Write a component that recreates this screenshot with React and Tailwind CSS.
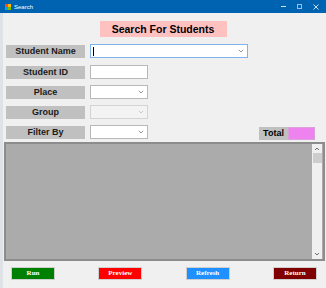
import React from "react";

const labelCls =
  "w-[79px] h-[13px] bg-[#c0c0c0] flex items-center justify-center text-[9px] font-bold text-[#1a1a1a] leading-none";

function Chevron({ light }) {
  return (
    <svg width="6" height="4" viewBox="0 0 6 4" className="mr-[3px]">
      <path d="M0.8 0.8 L3 3 L5.2 0.8" fill="none" stroke={light ? "#c4c4c4" : "#8a8a8a"} strokeWidth="0.9" />
    </svg>
  );
}

function Combo({ width, disabled, focused }) {
  return (
    <div
      className={
        "h-[14px] flex items-center justify-end border " +
        (focused ? "border-[#7eb4ea] bg-white " : disabled ? "border-[#d4d4d4] bg-[#f3f3f3] " : "border-[#b8b8b8] bg-white ")
      }
      style={{ width }}
    >
      {focused && <div className="w-px h-[9px] bg-black mr-auto ml-[2px]" />}
      <Chevron light={disabled} />
    </div>
  );
}

function Row({ label, children, right }) {
  return (
    <div className="flex items-center h-[14px]">
      <div className={labelCls}>{label}</div>
      <div className="ml-[5px] flex items-center">{children}</div>
      {right}
    </div>
  );
}

function Btn({ text, color }) {
  return (
    <div className="p-px bg-[#cfcfcf]">
      <div
        className="w-[42px] h-[11px] flex items-center justify-center text-white text-[7px] font-bold leading-none"
        style={{ backgroundColor: color, fontFamily: '"Liberation Serif", serif' }}
      >
        {text}
      </div>
    </div>
  );
}

export default function App() {
  return (
    <div
      className="w-[326px] h-[288px] bg-[#f0f0f0] flex flex-col overflow-hidden"
      style={{ fontFamily: '"Liberation Sans", Arial, sans-serif' }}
    >
      <div className="h-[13px] bg-[#0063b1] flex items-center">
        <div className="ml-[5px] w-[6px] h-[6px] grid grid-cols-2">
          <div className="bg-[#f25022]" />
          <div className="bg-[#ffb900]" />
          <div className="bg-[#00a4ef]" />
          <div className="bg-[#7fba00]" />
        </div>
        <span className="ml-[3px] text-[6px] text-white leading-none">Search</span>
        <div className="ml-auto flex items-center gap-[11px] mr-[7px] text-white">
          <div className="w-[5px] h-px bg-[#cfe0f0]" />
          <div className="w-[5px] h-[5px] border border-[#9fbfdf]" />
          <svg width="6" height="6" viewBox="0 0 6 6">
            <path d="M0.5 0.5 L5.5 5.5 M5.5 0.5 L0.5 5.5" stroke="#e6eef7" strokeWidth="0.9" />
          </svg>
        </div>
      </div>

      <div className="flex-1 flex flex-col border-l-[3px] border-[#dfe3e8]">
        <div className="flex justify-center mt-[8px] -ml-[3px]">
          <div className="w-[127px] h-[16px] bg-[#ffc0c0] flex items-center justify-center text-[10.5px] font-bold leading-none text-black">
            Search For Students
          </div>
        </div>

        <div className="mt-[7px] ml-[3px] flex flex-col gap-[6px] pr-[11px]">
          <Row label="Student Name">
            <Combo width={158} focused />
          </Row>
          <div className="mt-[1px]">
            <Row label="Student ID">
              <div className="w-[58px] h-[14px] bg-white border border-[#b8b8b8]" />
            </Row>
          </div>
          <Row label="Place">
            <Combo width={58} />
          </Row>
          <Row label="Group">
            <Combo width={58} disabled />
          </Row>
          <Row
            label="Filter By"
            right={
              <div className="ml-auto flex items-center mt-[2px]">
                <div className="w-[29px] h-[13px] bg-[#c0c0c0] flex items-center justify-center text-[9px] font-bold leading-none text-black">
                  Total
                </div>
                <div className="w-[27px] h-[13px] bg-[#ee82ee] border border-[#d9a0d9]" />
              </div>
            }
          >
            <Combo width={58} />
          </Row>
        </div>

        <div className="mt-[3px] ml-[1px] mr-[1px] h-[119px] bg-[#ababab] border-2 border-[#8c8c8c] flex justify-end">
          <div className="w-[10px] mr-[1px] bg-[#f0f0f0] flex flex-col items-center">
            <svg width="6" height="6" viewBox="0 0 6 6" className="mt-[2px]">
              <path d="M1 4 L3 2 L5 4" fill="none" stroke="#606060" strokeWidth="0.9" />
            </svg>
            <div className="w-[9px] h-[10px] bg-[#cdcdcd] mt-[1px]" />
            <div className="flex-1" />
            <svg width="6" height="6" viewBox="0 0 6 6" className="mb-[2px]">
              <path d="M1 2 L3 4 L5 2" fill="none" stroke="#606060" strokeWidth="0.9" />
            </svg>
          </div>
        </div>

        <div className="mt-[6px] flex items-center justify-between pl-[8px] pr-[9px]">
          <Btn text="Run" color="#008000" />
          <Btn text="Preview" color="#ff0000" />
          <Btn text="Refresh" color="#1e90ff" />
          <Btn text="Return" color="#800000" />
        </div>
      </div>
    </div>
  );
}
